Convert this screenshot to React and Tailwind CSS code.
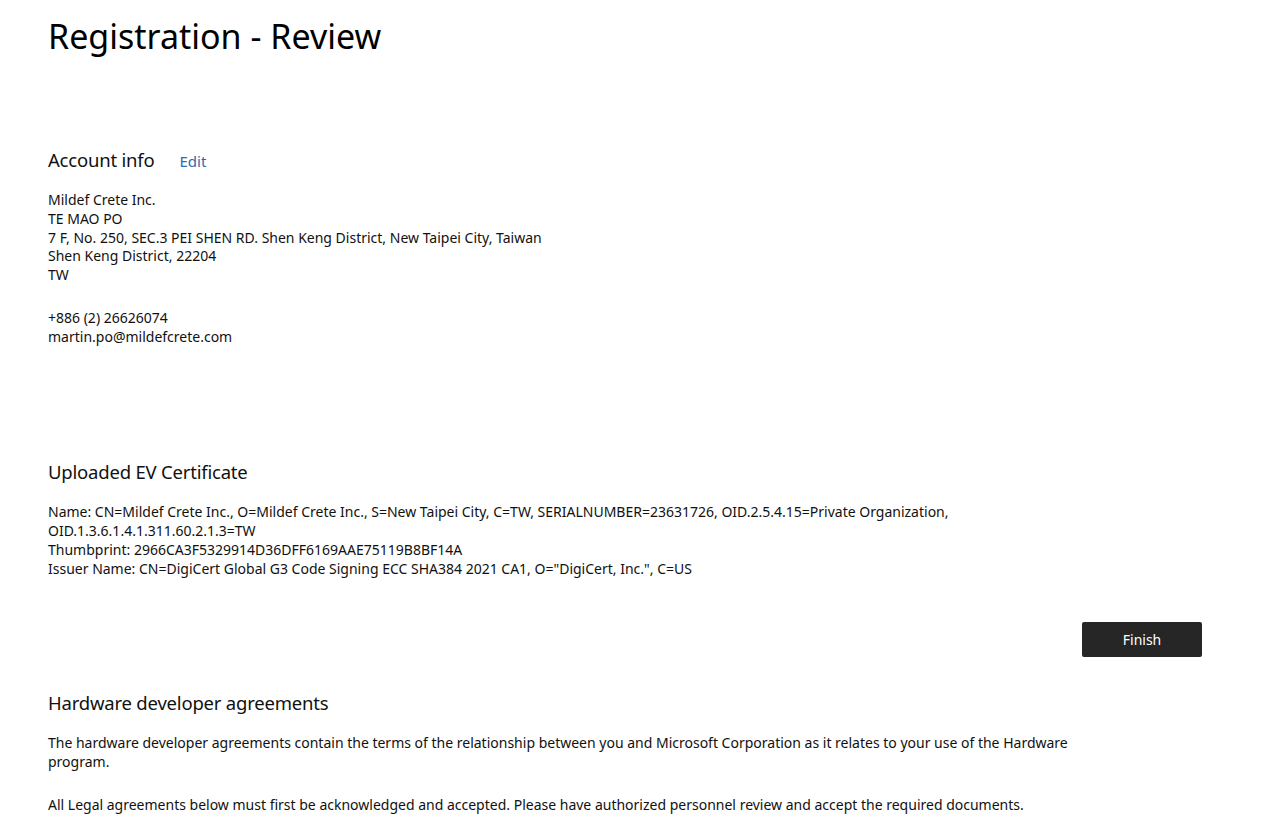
import React from 'react';

const ACCOUNT = {
  company: 'Mildef Crete Inc.',
  contact: 'TE MAO PO',
  address: '7 F, No. 250, SEC.3 PEI SHEN RD. Shen Keng District, New Taipei City, Taiwan',
  cityZip: 'Shen Keng District, 22204',
  country: 'TW',
  phone: '+886 (2) 26626074',
  email: 'martin.po@mildefcrete.com',
};

const CERT = {
  name: 'CN=Mildef Crete Inc., O=Mildef Crete Inc., S=New Taipei City, C=TW, SERIALNUMBER=23631726, OID.2.5.4.15=Private Organization, OID.1.3.6.1.4.1.311.60.2.1.3=TW',
  thumbprint: '2966CA3F5329914D36DFF6169AAE75119B8BF14A',
  issuer: 'CN=DigiCert Global G3 Code Signing ECC SHA384 2021 CA1, O="DigiCert, Inc.", C=US',
};

function SectionTitle({ children }) {
  return <h2 className="text-[18.5px] leading-[28px] tracking-[-0.2px] font-normal">{children}</h2>;
}

export default function App() {
  return (
    <div
      className="min-h-screen bg-white text-[#111] px-12 pt-[14px] pb-10"
      style={{ fontFamily: '"Noto Sans", sans-serif' }}
    >
      <h1 className="text-[34px] leading-[44px] font-normal text-black">Registration - Review</h1>

      <section className="mt-[88px]">
        <div className="flex items-baseline gap-[25px]">
          <SectionTitle>Account info</SectionTitle>
          <button className="text-[15px] text-[#2b6cb5] hover:underline cursor-pointer">Edit</button>
        </div>
        <div className="mt-[17px] text-[14px] leading-[18.75px]">
          <div>{ACCOUNT.company}</div>
          <div>{ACCOUNT.contact}</div>
          <div>{ACCOUNT.address}</div>
          <div>{ACCOUNT.cityZip}</div>
          <div>{ACCOUNT.country}</div>
        </div>
        <div className="mt-6 text-[14px] leading-[18.75px]">
          <div>{ACCOUNT.phone}</div>
          <div>{ACCOUNT.email}</div>
        </div>
      </section>

      <section className="mt-[112px]">
        <SectionTitle>Uploaded EV Certificate</SectionTitle>
        <div className="mt-[17px] w-[1040px] text-[14px] leading-[18.75px]">
          <div>{`Name: ${CERT.name}`}</div>
          <div>{`Thumbprint: ${CERT.thumbprint}`}</div>
          <div>{`Issuer Name: ${CERT.issuer}`}</div>
        </div>
      </section>

      <div className="mt-[44px] flex justify-end w-[1154px]">
        <button className="w-[120px] h-[35px] bg-[#262626] text-white text-[14px] rounded-[2px] cursor-pointer">
          Finish
        </button>
      </div>

      <section className="mt-8">
        <SectionTitle>Hardware developer agreements</SectionTitle>
        <p className="mt-[17px] w-[1040px] text-[14px] leading-[18.75px]">
          The hardware developer agreements contain the terms of the relationship between you and Microsoft Corporation as it relates to your use of the Hardware program.
        </p>
        <p className="mt-6 w-[1040px] text-[14px] leading-[18.75px]">
          All Legal agreements below must first be acknowledged and accepted. Please have authorized personnel review and accept the required documents.
        </p>
      </section>
    </div>
  );
}
